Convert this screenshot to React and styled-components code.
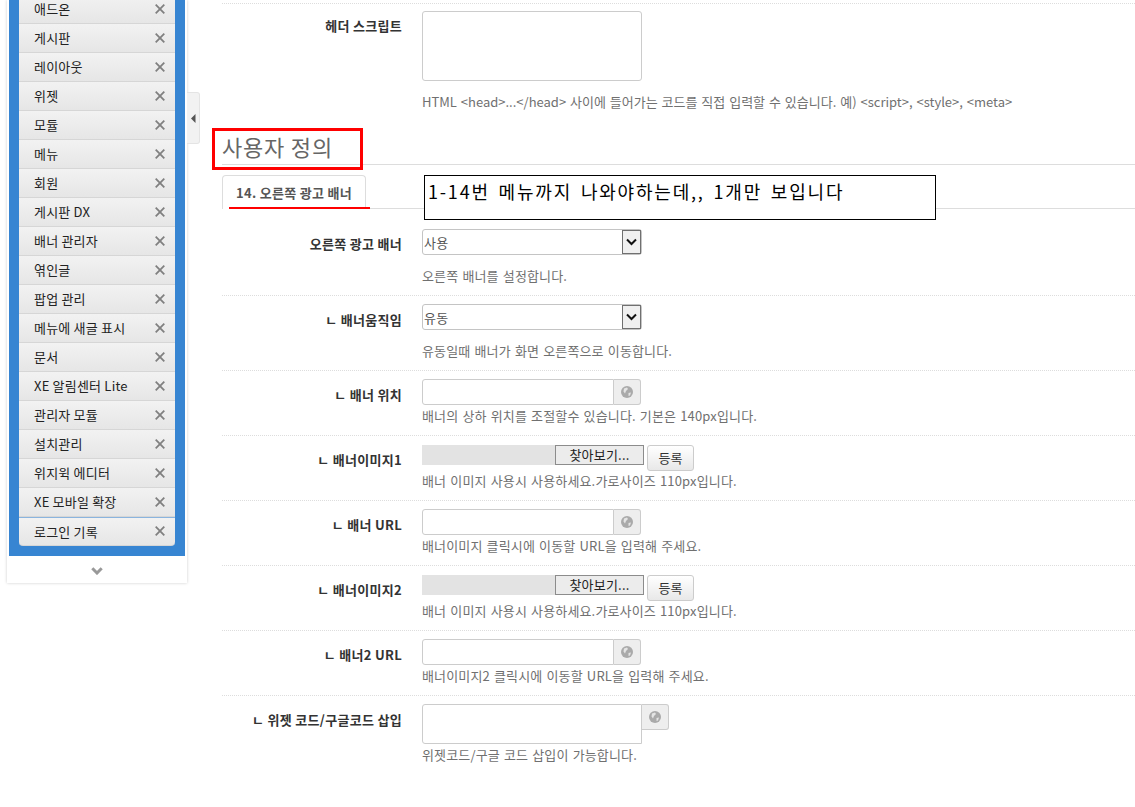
import React from "react";
import styled, { createGlobalStyle } from "styled-components";

const menus = ["애드온", "게시판", "레이아웃", "위젯", "모듈", "메뉴", "회원", "게시판 DX", "배너 관리자", "엮인글", "팝업 관리", "메뉴에 새글 표시", "문서", "XE 알림센터 Lite", "관리자 모듈", "설치관리", "위지윅 에디터", "XE 모바일 확장", "로그인 기록"];

const GlobalStyle = createGlobalStyle`
  html, body { margin: 0; padding: 0; background: #fff; height: 100%; overflow: hidden; }
  body { font-family: "Noto Sans CJK KR", "Liberation Sans", sans-serif; font-size: 13px; color: #333; }
`;

const Page = styled.div`
  position: relative;
  display: flex;
  align-items: flex-start;
  width: 1135px;
  height: 807px;
  overflow: hidden;
`;

const Side = styled.aside`
  flex: none;
  width: 180px;
  margin-left: 7px;
  background: #fff;
  box-shadow: 0 0 3px rgba(0, 0, 0, 0.2);
`;

const BlueBox = styled.div`
  margin: 0 2px;
  padding: 0 10px 10px;
  background: #3785d2;
`;

const MenuRow = styled.div`
  display: flex;
  align-items: center;
  justify-content: space-between;
  box-sizing: border-box;
  height: 29px;
  padding: 0 10px 1px 15px;
  margin-top: ${(p) => (p.$first ? "-5px" : "0")};
  background: linear-gradient(#f2f2f2, #e6e6e6);
  border-bottom: 1px solid #d6d6d6;
  border-top: ${(p) => (p.$last ? "1px solid #8ab4de" : "0")};
  border-radius: ${(p) => (p.$last ? "0 0 4px 4px" : "0")};
  color: #222;
  font-size: 13px;
  letter-spacing: 0.2px;
`;

const MoreRow = styled.div`
  display: flex;
  align-items: center;
  justify-content: center;
  height: 27px;
  padding-top: 2px;
  box-sizing: border-box;
`;

const Handle = styled.div`
  flex: none;
  display: flex;
  align-items: center;
  justify-content: center;
  box-sizing: border-box;
  width: 13px;
  height: 52px;
  margin-top: 92px;
  background: #f2f2f2;
  border: 1px solid #e4e4e4;
  border-left: 0;
  border-radius: 0 3px 3px 0;
`;

const Main = styled.main`
  flex: none;
  width: 913px;
  margin-left: 22px;
`;

const TopLine = styled.div`
  height: 7px;
  margin-top: 3px;
  border-top: 1px dotted #ddd;
`;

const ScriptRow = styled.div`
  display: flex;
  height: 115px;
`;

const Label = styled.div`
  flex: none;
  width: 180px;
  margin-right: 20px;
  padding-top: ${(p) => p.$top || "7px"};
  text-align: right;
  font-weight: 700;
  font-size: 13px;
  letter-spacing: 0.3px;
  line-height: 18px;
  color: #333;
`;

const Field = styled.div`
  flex: 1;
  display: flex;
  flex-direction: column;
  align-items: flex-start;
`;

const TextArea = styled.div`
  box-sizing: border-box;
  width: 220px;
  height: 70px;
  background: #fff;
  border: 1px solid #ccc;
  border-radius: 3px;
`;

const Help = styled.p`
  margin: ${(p) => p.$gap || "2px"} 0 0;
  font-size: 13px;
  letter-spacing: ${(p) => p.$spacing || "0.15px"};
  word-spacing: 1px;
  line-height: 18px;
  color: #707070;
`;

const Heading = styled.h2`
  height: 38px;
  margin: 0;
  border-bottom: 1px solid #ddd;
  font-size: 22px;
  font-weight: 400;
  line-height: 40px;
  color: #666;
  letter-spacing: 0.8px;
`;

const Tabs = styled.div`
  height: 33px;
  margin-top: 10px;
  border-bottom: 1px solid #ddd;
`;

const Tab = styled.div`
  box-sizing: border-box;
  display: flex;
  align-items: center;
  justify-content: center;
  width: 144px;
  height: 34px;
  padding-bottom: 1px;
  background: #fff;
  border: 1px solid #ddd;
  border-bottom: 0;
  border-radius: 4px 4px 0 0;
  font-size: 13px;
  letter-spacing: 0.3px;
  font-weight: 700;
  color: #555;
`;

const Row = styled.div`
  display: flex;
  box-sizing: border-box;
  height: ${(p) => p.$h};
  padding-top: ${(p) => p.$pad};
  border-bottom: ${(p) => (p.$plain ? "0" : "1px dotted #ddd")};
`;

const SelectBox = styled.div`
  box-sizing: border-box;
  display: flex;
  align-items: center;
  justify-content: space-between;
  width: 220px;
  height: 26px;
  padding-left: 1px;
  background: #fff;
  border: 1px solid #c4c4c4;
  border-radius: 3px;
  color: #555;
  font-size: 13px;
  letter-spacing: 0.2px;
`;

const SelectArrow = styled.span`
  display: flex;
  align-items: center;
  justify-content: center;
  box-sizing: border-box;
  width: 19px;
  height: 24px;
  background: #f0f0f0;
  border: 1px solid #707070;
`;

const InputGroup = styled.div`
  display: flex;
  align-items: flex-start;
`;

const TextInput = styled.div`
  box-sizing: border-box;
  width: ${(p) => p.$w || "192px"};
  height: ${(p) => p.$h || "26px"};
  background: #fff;
  border: 1px solid #ccc;
  border-radius: 3px 0 0 3px;
`;

const Addon = styled.span`
  box-sizing: border-box;
  display: flex;
  align-items: center;
  justify-content: center;
  width: 27px;
  height: 26px;
  background: #eee;
  border: 1px solid #ccc;
  border-left: 0;
  border-radius: 0 3px 3px 0;
`;

const FileRow = styled.div`
  display: flex;
  align-items: flex-start;
  height: 25px;
`;

const FileTrack = styled.div`
  width: 133px;
  height: 20px;
  background: #e3e3e3;
`;

const FileButton = styled.div`
  box-sizing: border-box;
  width: 89px;
  height: 20px;
  background: #ececec;
  border: 1px solid #8c8c8c;
  text-align: center;
  font-size: 13px;
  letter-spacing: 0.2px;
  line-height: 17px;
  color: #222;
`;

const SaveButton = styled.div`
  box-sizing: border-box;
  width: 47px;
  height: 26px;
  margin-left: 3px;
  background: linear-gradient(#fff, #e8e8e8);
  border: 1px solid #ccc;
  border-radius: 3px;
  text-align: center;
  font-size: 13px;
  line-height: 24px;
  color: #333;
`;

const RedBox = styled.div`
  position: absolute;
  left: 212px;
  top: 128px;
  box-sizing: border-box;
  width: 151px;
  height: 42px;
  border: 3px solid #f00;
`;

const RedLine = styled.div`
  position: absolute;
  left: 229px;
  top: 207px;
  width: 141px;
  height: 2px;
  background: #f00;
`;

const Note = styled.div`
  position: absolute;
  left: 424px;
  top: 175px;
  box-sizing: border-box;
  width: 512px;
  height: 45px;
  padding: 2px 3px;
  background: #fff;
  border: 1px solid #000;
  font-size: 18px;
  letter-spacing: 1.8px;
  word-spacing: 3px;
  line-height: 26px;
  color: #000;
`;

const CloseIcon = () => (
  <svg width="10" height="10" viewBox="0 0 10 10">
    <path d="M.7.7l8.6 8.6M9.3.7L.7 9.3" stroke="#808080" strokeWidth="1.8" fill="none" />
  </svg>
);

const GlobeIcon = () => (
  <svg width="12" height="12" viewBox="0 0 12 12">
    <circle cx="6" cy="6" r="6" fill="#aaa" />
    <path d="M3 2.5l3-1 1 1.5-2 2-1 2.5-1.5-2zM7.5 7l2.5-.5-1 3-1.5.5z" fill="#e4e4e4" />
  </svg>
);

const Arrow = () => (
  <svg width="11" height="8" viewBox="0 0 11 8">
    <path d="M1 1.5l4.5 4.5 4.5-4.5" stroke="#111" strokeWidth="2" fill="none" />
  </svg>
);

const SelectField = ({ value }) => (
  <SelectBox>
    {value}
    <SelectArrow>
      <Arrow />
    </SelectArrow>
  </SelectBox>
);

const InputField = ({ w, h }) => (
  <InputGroup>
    <TextInput $w={w} $h={h} />
    <Addon>
      <GlobeIcon />
    </Addon>
  </InputGroup>
);

const FileField = () => (
  <FileRow>
    <FileTrack />
    <FileButton>찾아보기...</FileButton>
    <SaveButton>등록</SaveButton>
  </FileRow>
);

export default function App() {
  return (
    <Page>
      <GlobalStyle />
      <Side>
        <BlueBox>
          {menus.map((name, i) => (
            <MenuRow key={name} $first={i === 0} $last={i === menus.length - 1}>
              {name}
              <CloseIcon />
            </MenuRow>
          ))}
        </BlueBox>
        <MoreRow>
          <svg width="12" height="8" viewBox="0 0 12 8">
            <path d="M1.3 1.3L6 6l4.7-4.7" stroke="#999" strokeWidth="3" fill="none" />
          </svg>
        </MoreRow>
      </Side>
      <Handle>
        <svg width="5" height="9" viewBox="0 0 5 9">
          <path d="M4.5 0v9L0 4.5z" fill="#555" />
        </svg>
      </Handle>
      <Main>
        <TopLine />
        <ScriptRow>
          <Label $top="6px">헤더 스크립트</Label>
          <Field>
            <TextArea />
            <Help $gap="12px" $spacing="0">{"HTML <head>...</head> 사이에 들어가는 코드를 직접 입력할 수 있습니다. 예) <script>, <style>, <meta>"}</Help>
          </Field>
        </ScriptRow>
        <Heading>사용자 정의</Heading>
        <Tabs>
          <Tab>14. 오른쪽 광고 배너</Tab>
        </Tabs>
        <Row $h="87px" $pad="20px">
          <Label $top="6px">오른쪽 광고 배너</Label>
          <Field>
            <SelectField value="사용" />
            <Help $gap="12px">오른쪽 배너를 설정합니다.</Help>
          </Field>
        </Row>
        <Row $h="75px" $pad="8px">
          <Label>ㄴ 배너움직임</Label>
          <Field>
            <SelectField value="유동" />
            <Help $gap="12px">유동일때 배너가 화면 오른쪽으로 이동합니다.</Help>
          </Field>
        </Row>
        <Row $h="65px" $pad="8px">
          <Label>ㄴ 배너 위치</Label>
          <Field>
            <InputField />
            <Help>배너의 상하 위치를 조절할수 있습니다. 기본은 140px입니다.</Help>
          </Field>
        </Row>
        <Row $h="65px" $pad="9px">
          <Label $top="6px">ㄴ 배너이미지1</Label>
          <Field>
            <FileField />
            <Help>배너 이미지 사용시 사용하세요.가로사이즈 110px입니다.</Help>
          </Field>
        </Row>
        <Row $h="65px" $pad="8px">
          <Label>ㄴ 배너 URL</Label>
          <Field>
            <InputField />
            <Help>배너이미지 클릭시에 이동할 URL을 입력해 주세요.</Help>
          </Field>
        </Row>
        <Row $h="65px" $pad="9px">
          <Label $top="6px">ㄴ 배너이미지2</Label>
          <Field>
            <FileField />
            <Help>배너 이미지 사용시 사용하세요.가로사이즈 110px입니다.</Help>
          </Field>
        </Row>
        <Row $h="65px" $pad="8px">
          <Label>ㄴ 배너2 URL</Label>
          <Field>
            <InputField />
            <Help>배너이미지2 클릭시에 이동할 URL을 입력해 주세요.</Help>
          </Field>
        </Row>
        <Row $h="80px" $pad="8px" $plain>
          <Label>ㄴ 위젯 코드/구글코드 삽입</Label>
          <Field>
            <InputField w="220px" h="40px" />
            <Help>위젯코드/구글 코드 삽입이 가능합니다.</Help>
          </Field>
        </Row>
      </Main>
      <RedBox />
      <RedLine />
      <Note>1-14번 메뉴까지 나와야하는데,, 1개만 보입니다</Note>
    </Page>
  );
}
